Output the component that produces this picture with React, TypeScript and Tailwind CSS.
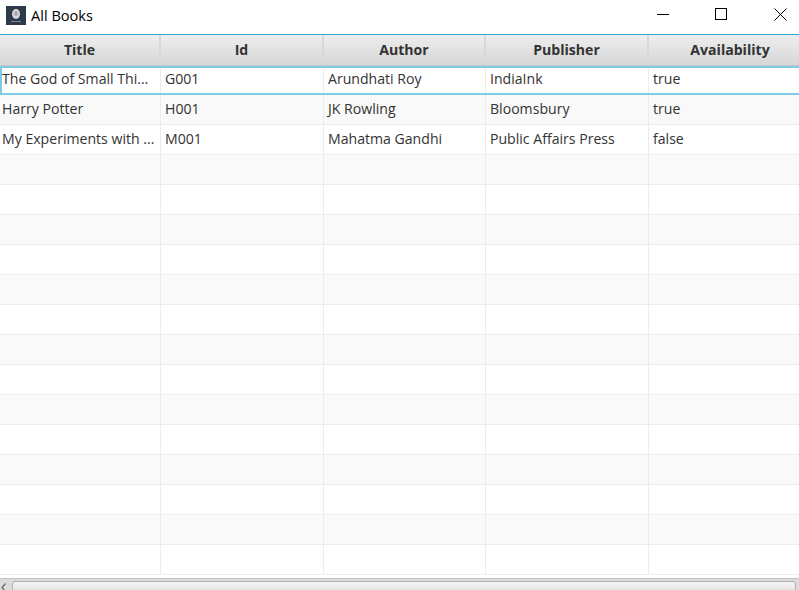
const rows: string[][] = [
  ["The God of Small Thi...", "G001", "Arundhati Roy", "IndiaInk", "true"],
  ["Harry Potter", "H001", "JK Rowling", "Bloomsbury", "true"],
  ["My Experiments with ...", "M001", "Mahatma Gandhi", "Public Affairs Press", "false"],
  ...Array.from({ length: 14 }, () => ["", "", "", "", ""]),
];
const headers = ["Title", "Id", "Author", "Publisher", "Availability"];
const cols = "grid grid-cols-[161px_163px_162px_163px_162px] w-[811px]";

export default function App() {
  return (
    <div className="w-[799px] h-[590px] overflow-hidden bg-white flex flex-col font-['Open_Sans','Noto_Sans',sans-serif] text-[14.1px] text-[#333]">
      <div className="h-[34px] shrink-0 flex items-center relative">
        <svg className="ml-[6px] mt-[-3px]" width="20" height="19" viewBox="0 0 20 19">
          <rect width="20" height="19" fill="#2c3a4c" />
          <ellipse cx="10" cy="8" rx="4" ry="5" fill="#d8d8d8" />
          <ellipse cx="10" cy="7.5" rx="2.2" ry="2.6" fill="#b8a8a8" />
          <rect x="5" y="15" width="10" height="1" fill="#7a8694" />
        </svg>
        <span className="ml-[5px] mt-[-2px] text-black text-[14.6px]">All Books</span>
        <div className="ml-auto flex items-center text-black">
          <svg width="13" height="13" viewBox="0 0 13 13" className="mr-[45px] mt-[-6px]"><path d="M0 6.5H12" stroke="#000" strokeWidth="1" /></svg>
          <svg width="13" height="13" viewBox="0 0 13 13" className="mr-[46px] mt-[-6px]"><rect x="0.5" y="0.5" width="11" height="11" fill="none" stroke="#000" strokeWidth="1" /></svg>
          <svg width="13" height="13" viewBox="0 0 13 13" className="mr-[12px] mt-[-6px]"><path d="M0.5 0.5L12.5 12.5M12.5 0.5L0.5 12.5" stroke="#000" strokeWidth="1" /></svg>
        </div>
      </div>
      <div className="flex-1 min-h-0 relative border-t border-[#2aa9d8] overflow-hidden">
        <div className={`${cols} h-[31px] bg-gradient-to-b from-[#eeeeee] to-[#d6d6d6] border-b border-[#c8c8c8]`}>
          {headers.map((h) => (
            <div key={h} className="flex items-center justify-center font-bold border-r-2 border-[#d8d8d8] last:border-r-0 text-[#333] pb-[1px]">{h}</div>
          ))}
        </div>
        <div className="relative">
          {rows.map((r, i) => (
            <div
              key={i}
              className={`${cols} border-b border-[#ededed] ${i % 2 === 1 ? "bg-[#f9f9f9]" : "bg-white"} ${i === 0 ? "h-[29px]" : "h-[30px]"}`}
            >
              {r.map((c, j) => (
                <div
                  key={j}
                  className={`flex items-center whitespace-nowrap overflow-hidden border-r border-[#ececec] last:border-r-0 ${i === 0 ? "pb-[3px]" : "pb-[2px]"} ${j === 0 ? "pl-[2px]" : "pl-[4px]"}`}
                >
                  {c}
                </div>
              ))}
            </div>
          ))}
          <div className="absolute left-0 top-0 w-[811px] h-[29px] border-2 border-[#7fcbe6]" />
        </div>
        <div className="absolute bottom-0 left-0 right-0 h-[12px] bg-[#dcdcdc] border-t border-[#c4c4c4] flex items-start pt-[2px]">
          <svg width="10" height="10" viewBox="0 0 10 10" className="shrink-0 mt-[1px]"><path d="M5.5 1.5L2 5.5L5.5 9.5" fill="none" stroke="#666" strokeWidth="1.2" /></svg>
          <div className="ml-[2px] mr-[3px] flex-1 h-[12px] rounded-t-[3px] border border-[#b0b0b0] bg-gradient-to-b from-[#f4f4f4] to-[#e2e2e2]" />
        </div>
      </div>
    </div>
  );
}
